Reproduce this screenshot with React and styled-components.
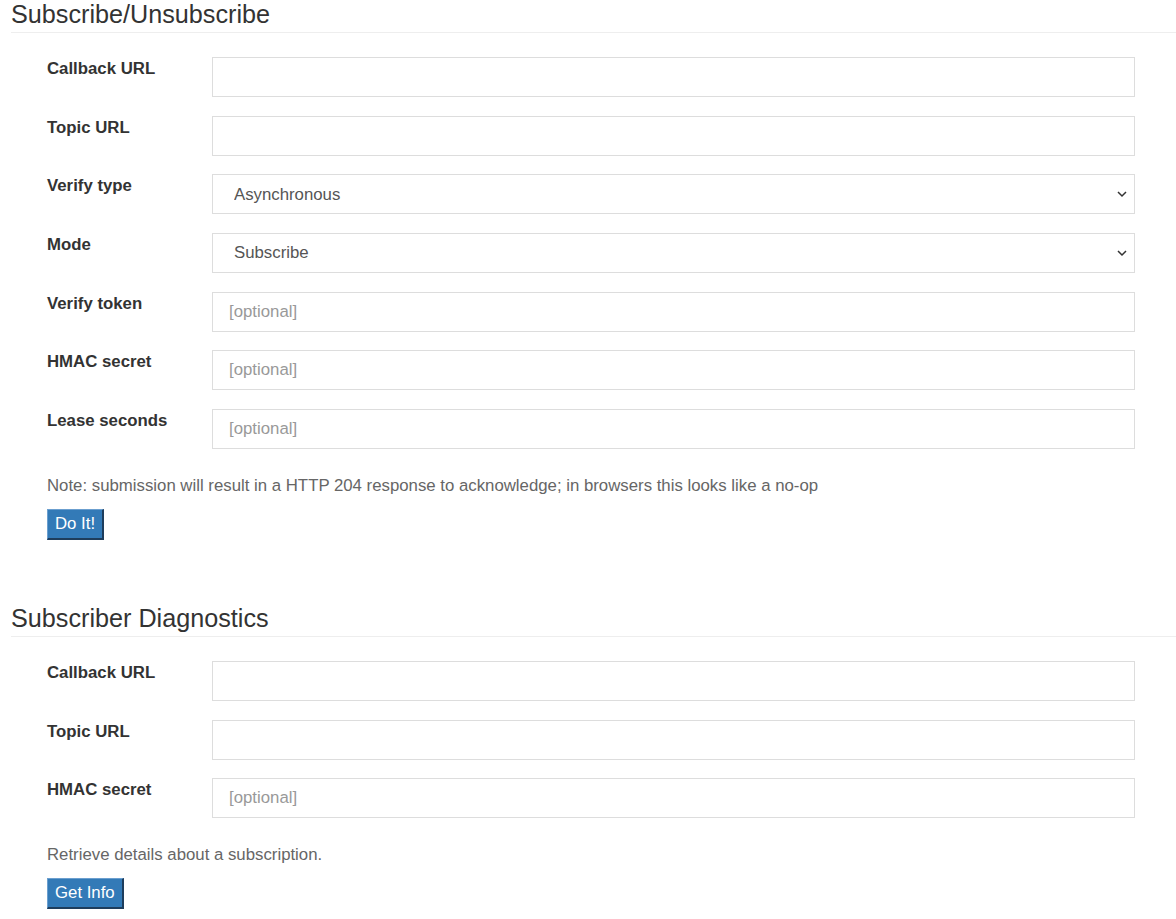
import React from "react";
import styled, { createGlobalStyle } from "styled-components";

const Global = createGlobalStyle`
  html, body { margin: 0; padding: 0; background: #fff; }
  body { font-family: "Liberation Sans", Arial, sans-serif; color: #333; font-size: 16.8px; }
`;

const Page = styled.div`
  padding: 0 0 10px 11px;
`;

const Section = styled.section`
  margin-bottom: ${(p) => p.$gap || 0}px;
`;

const Heading = styled.h2`
  margin: 0;
  font-size: 25.2px;
  font-weight: normal;
  line-height: 29px;
  color: #333;
  padding-bottom: 3px;
  border-bottom: 1px solid #eee;
`;

const Form = styled.form`
  padding: 24px 41px 0 36px;
  display: flex;
  flex-direction: column;
`;

const Rows = styled.div`
  display: grid;
  grid-template-columns: 165px 1fr;
  row-gap: 18.67px;
`;

const Label = styled.label`
  font-weight: bold;
  font-size: 16.8px;
  line-height: 20px;
  padding-top: 2px;
  color: #333;
`;

const Input = styled.input`
  box-sizing: border-box;
  height: 40px;
  width: 100%;
  border: 1px solid #ddd;
  border-radius: 0;
  padding: 0 16px;
  font-family: "Liberation Sans", Arial, sans-serif;
  font-size: 16.8px;
  color: #555;
  background: #fff;
  outline: none;
  &::placeholder { color: #999; }
`;

const SelectWrap = styled.div`
  position: relative;
`;

const Select = styled.select`
  box-sizing: border-box;
  appearance: none;
  -webkit-appearance: none;
  height: 40px;
  width: 100%;
  border: 1px solid #ddd;
  border-radius: 0;
  padding: 0 16px 0 21px;
  font-family: "Liberation Sans", Arial, sans-serif;
  font-size: 16.8px;
  color: #555;
  background: #fff;
  outline: none;
`;

const Chevron = styled.svg`
  position: absolute;
  right: 7px;
  top: 16px;
  pointer-events: none;
`;

const Note = styled.p`
  margin: 27px 0 0 0;
  font-size: 16.8px;
  line-height: 20px;
  color: #666;
`;

const Button = styled.button`
  align-self: flex-start;
  margin-top: 13px;
  box-sizing: border-box;
  height: 31px;
  padding: 0 7px 0 7px;
  font-family: "Liberation Sans", Arial, sans-serif;
  font-size: 16.8px;
  color: #fff;
  background: #337ab7;
  border-style: solid;
  border-width: 1px 2px 2px 1px;
  border-color: #6b9fcf #1e3d5c #1e3d5c #6b9fcf;
  border-radius: 0;
  cursor: pointer;
`;

const ChevronIcon = () => (
  <Chevron width="12" height="8" viewBox="0 0 12 8">
    <path d="M2 2 L6 6 L10 2" fill="none" stroke="#333" strokeWidth="1.5" />
  </Chevron>
);

const Field = ({ label, placeholder, options }) => (
  <>
    <Label>{label}</Label>
    {options ? (
      <SelectWrap>
        <Select defaultValue={options[0]}>
          {options.map((o) => (
            <option key={o}>{o}</option>
          ))}
        </Select>
        <ChevronIcon />
      </SelectWrap>
    ) : (
      <Input type="text" placeholder={placeholder} />
    )}
  </>
);

export default function App() {
  return (
    <Page>
      <Global />
      <Section $gap={64}>
        <Heading>Subscribe/Unsubscribe</Heading>
        <Form onSubmit={(e) => e.preventDefault()}>
          <Rows>
            <Field label="Callback URL" />
            <Field label="Topic URL" />
            <Field label="Verify type" options={["Asynchronous", "Synchronous"]} />
            <Field label="Mode" options={["Subscribe", "Unsubscribe"]} />
            <Field label="Verify token" placeholder="[optional]" />
            <Field label="HMAC secret" placeholder="[optional]" />
            <Field label="Lease seconds" placeholder="[optional]" />
          </Rows>
          <Note>Note: submission will result in a HTTP 204 response to acknowledge; in browsers this looks like a no-op</Note>
          <Button type="submit">Do It!</Button>
        </Form>
      </Section>
      <Section>
        <Heading>Subscriber Diagnostics</Heading>
        <Form onSubmit={(e) => e.preventDefault()}>
          <Rows>
            <Field label="Callback URL" />
            <Field label="Topic URL" />
            <Field label="HMAC secret" placeholder="[optional]" />
          </Rows>
          <Note>Retrieve details about a subscription.</Note>
          <Button type="submit">Get Info</Button>
        </Form>
      </Section>
    </Page>
  );
}
